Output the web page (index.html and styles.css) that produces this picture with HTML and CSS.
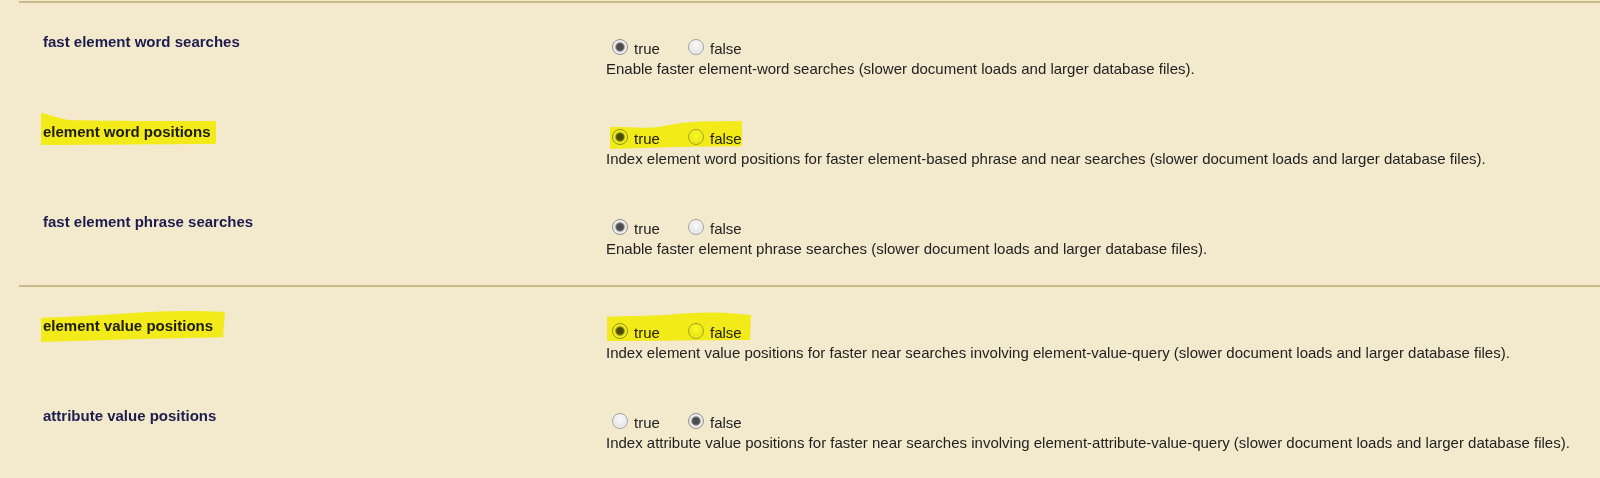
FILE: index.html
```html
<!DOCTYPE html>
<html lang="en">
<head>
<meta charset="utf-8">
<title>Index settings</title>
<link rel="stylesheet" href="styles.css">
</head>
<body>
<div class="page">
  <section class="group first">
    <div class="row">
      <div class="label">fast element word searches</div>
      <div class="value">
        <div class="options">
          <label class="opt"><span class="radio checked"></span>true</label>
          <label class="opt"><span class="radio"></span>false</label>
        </div>
        <div class="desc">Enable faster element-word searches (slower document loads and larger database files).</div>
      </div>
    </div>
    <div class="row">
      <div class="label">element word positions
        <svg class="hl hl-label1" viewBox="0 0 175 32" preserveAspectRatio="none"><path d="M0 0 C8 1 16 5 28 7 C60 8 120 8 175 8 L175 31 C120 31 60 32 0 32 Z"/></svg>
      </div>
      <div class="value">
        <div class="options">
          <label class="opt"><span class="radio checked"></span>true</label>
          <label class="opt"><span class="radio"></span>false</label>
          <svg class="hl hl-opts1" viewBox="0 0 132 30" preserveAspectRatio="none"><path d="M0 6 C20 6 35 8 50 6 C65 3 75 1 90 0.5 L132 0 L132 26 C90 26 45 27 0 29 Z"/></svg>
        </div>
        <div class="desc">Index element word positions for faster element-based phrase and near searches (slower document loads and larger database files).</div>
      </div>
    </div>
    <div class="row">
      <div class="label">fast element phrase searches</div>
      <div class="value">
        <div class="options">
          <label class="opt"><span class="radio checked"></span>true</label>
          <label class="opt"><span class="radio"></span>false</label>
        </div>
        <div class="desc">Enable faster element phrase searches (slower document loads and larger database files).</div>
      </div>
    </div>
  </section>
  <section class="group">
    <div class="row">
      <div class="label">element value positions
        <svg class="hl hl-label2" viewBox="0 0 184 34" preserveAspectRatio="none"><path d="M0 8 C30 7 60 5 90 3 C120 1 150 0 184 2 L182 28 C120 29 60 31 0 33 Z"/></svg>
      </div>
      <div class="value">
        <div class="options">
          <label class="opt"><span class="radio checked"></span>true</label>
          <label class="opt"><span class="radio"></span>false</label>
          <svg class="hl hl-opts2" viewBox="0 0 144 31" preserveAspectRatio="none"><path d="M0 5 C20 4 40 4 60 3 C80 1 100 0 120 1 L144 3 L143 29 C100 29 50 30 0 30 Z"/></svg>
        </div>
        <div class="desc">Index element value positions for faster near searches involving element-value-query (slower document loads and larger database files).</div>
      </div>
    </div>
    <div class="row">
      <div class="label">attribute value positions</div>
      <div class="value">
        <div class="options">
          <label class="opt"><span class="radio"></span>true</label>
          <label class="opt"><span class="radio checked"></span>false</label>
        </div>
        <div class="desc">Index attribute value positions for faster near searches involving element-attribute-value-query (slower document loads and larger database files).</div>
      </div>
    </div>
  </section>
</div>
</body>
</html>
```
FILE: styles.css
```css
html, body {
  margin: 0;
  padding: 0;
  background: #f3eacd;
}
body {
  font-family: "Liberation Sans", Arial, sans-serif;
  font-size: 15px;
  color: #222222;
}
.page {
  padding-top: 1px;
  overflow: hidden;
  height: 477px;
}
.group {
  margin-left: 19px;
  border-top: 2px solid #c9bb89;
}
.group.first {
  padding-bottom: 12px;
}
.row {
  display: grid;
  grid-template-columns: 563px 1fr;
  padding: 30px 0 15px 24px;
}
.label {
  position: relative;
  font-weight: bold;
  line-height: 18px;
  color: #1c1c4e;
  white-space: nowrap;
}
.value {
  padding-top: 6px;
}
.options {
  position: relative;
  height: 21px;
  line-height: 18px;
  white-space: nowrap;
  color: #222222;
}
.opt {
  display: inline-block;
  margin-right: 18px;
}
.radio {
  display: inline-block;
  box-sizing: border-box;
  width: 16px;
  height: 16px;
  margin: 0 6px 0 6px;
  vertical-align: -1px;
  border-radius: 50%;
  border: 1px solid #a3a3a3;
  background: radial-gradient(circle at 50% 40%, #fbfbfb 0, #ececec 45%, #d6d6d6 100%);
  box-shadow: inset 0 0 0 1px rgba(255, 255, 255, 0.6);
}
.radio.checked {
  border-color: #8e8e8e;
  background: radial-gradient(circle at 50% 50%, #4c4c4c 0, #4c4c4c 3.2px, #7a7a7a 4px, #d9d9d9 5px, #ededed 6px, #d4d4d4 100%);
}
.desc {
  line-height: 18px;
  white-space: nowrap;
  color: #222222;
}
.hl {
  position: absolute;
  fill: #ffff20;
  mix-blend-mode: multiply;
  pointer-events: none;
}
.hl-label1 {
  left: -2px;
  top: -10px;
  width: 175px;
  height: 32px;
}
.hl-label2 {
  left: -2px;
  top: -7px;
  width: 184px;
  height: 33px;
}
.hl-opts1 {
  left: 4px;
  top: -8px;
  width: 132px;
  height: 29px;
}
.hl-opts2 {
  left: 1px;
  top: -11px;
  width: 144px;
  height: 30px;
}
```
